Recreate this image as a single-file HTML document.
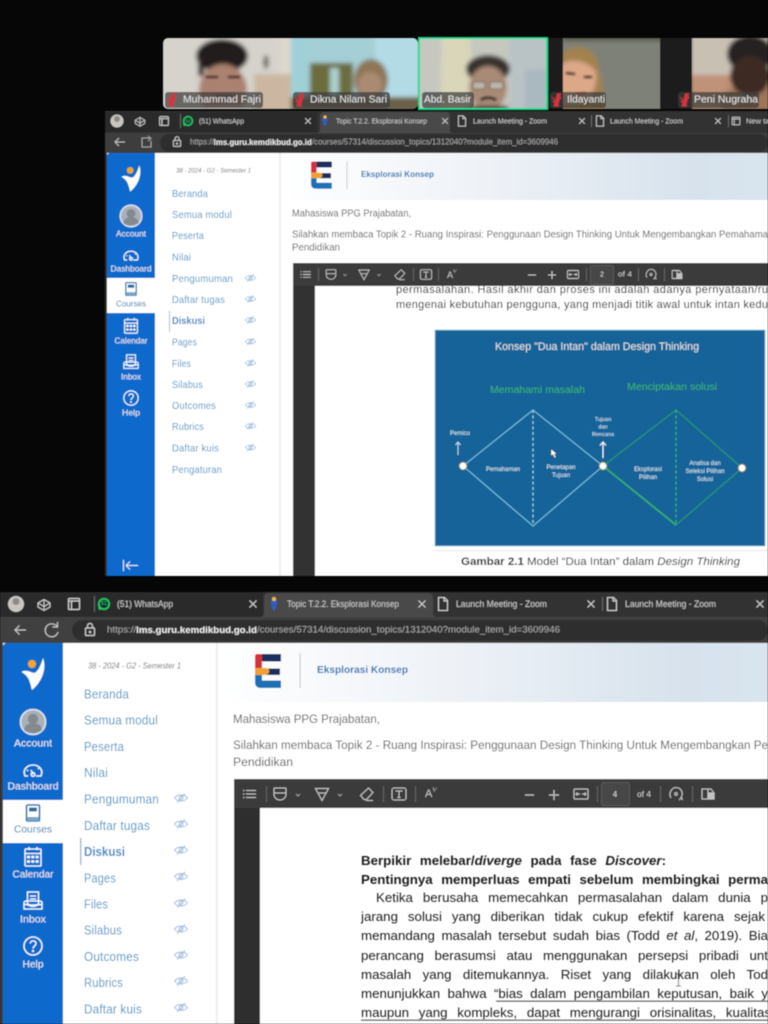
<!DOCTYPE html>
<html><head><meta charset="utf-8"><style>
html,body{margin:0;padding:0;background:#060606;width:768px;height:1024px;overflow:hidden}
svg{display:block;position:absolute;left:0;top:0}
text{font-family:"Liberation Sans",sans-serif;dominant-baseline:central}
.w{fill:#e6e6e6}.n{fill:#4a94c6;letter-spacing:.2px}
.i{fill:none;stroke:#c4c4c4;stroke-width:1.1}
.e{fill:none;stroke:#9dbcdb;stroke-width:1}
.s{fill:none;stroke:#fff;stroke-width:1.3}
.tab{fill:#cfcfcf}.bt{fill:#f2f2f2}
.g{fill:#5c5c5c}
.p{fill:#151515}
.d{fill:#dff0f6}
#txt{position:absolute;left:0;top:0;width:768px;height:1024px;overflow:hidden;filter:blur(.42px)}
.l{position:absolute;left:361px;width:407px;height:18px;line-height:18px;font-family:"Liberation Sans",sans-serif;font-size:13.3px;color:#1c1c1c;text-align:justify;text-align-last:justify}
</style></head><body>
<svg width="768" height="1024" viewBox="0 0 768 1024" xmlns="http://www.w3.org/2000/svg">
<defs>
<filter id="b" x="0" y="0" width="100%" height="100%"><feGaussianBlur stdDeviation=".42"/></filter>
<filter id="v" x="-20%" y="-20%" width="140%" height="140%"><feGaussianBlur stdDeviation="2"/></filter>
<filter id="v2" x="-20%" y="-20%" width="140%" height="140%"><feGaussianBlur stdDeviation="1"/></filter>
<clipPath id="t1"><rect x="163" y="38" width="255" height="71" rx="5"/></clipPath>
<clipPath id="t3"><rect x="420" y="39" width="126" height="69"/></clipPath>
<clipPath id="t4"><rect x="563" y="38" width="97" height="71"/></clipPath>
<clipPath id="t5"><rect x="692" y="38" width="76" height="71"/></clipPath>
<linearGradient id="ban" x1="0" x2="1" y1="0" y2="0"><stop offset="0" stop-color="#fff"/><stop offset=".42" stop-color="#eef2f7"/><stop offset=".85" stop-color="#d7e2ed"/><stop offset="1" stop-color="#d9e4ee"/></linearGradient>
<g id="eye" class="e"><path d="M-6.500 0C-3.500-4 3.500-4 6.500 0C3.500 4-3.500 4-6.500 0Z"/><circle r="2"/><path d="M-4 4.500L4-4.500"/></g>
<g id="logo"><path fill="#fff" d="M-11.500 6C-8 3-3 6 1 7C5 6 8-1 10-8C14 2 9 16-1 24C-3 16-4 10-11.500 6Z"/><circle cx="-1" cy="-2" r="4" fill="#f5a623"/></g>
<g id="avatar"><circle r="12.500" fill="#a9b0b8" stroke="#dfe7ef" stroke-width="1.600"/><circle cy="-3" r="5.200" fill="#858a90"/><path fill="#858a90" d="M-9 8C-8 2-4 1.500 0 1.500C4 1.500 8 2 9 8C5 12-5 12-9 8Z"/></g>
<g id="dash" class="s"><path d="M-5 5H-8C-11-2-5-6 0-6C5-6 11-2 8 5H3"/><path d="M0 3L-2-1M-6-1L-5 0M5-2L6-3"/><circle cx="0" cy="3.500" r="1.800"/></g>
<g id="book"><rect x="-6.500" y="-8" width="13" height="16" rx="1" fill="none" stroke="#2b6ea6" stroke-width="1.600"/><rect x="-4" y="-5.500" width="8" height="4" fill="#2b6ea6"/><rect x="-6" y="4" width="12" height="4" fill="#7aa5c9"/></g>
<g id="cal" class="s"><rect x="-8" y="-8" width="16" height="17" rx="1"/><path d="M-8-3.500H8M-4-10V-7M4-10V-7"/><path stroke-width="2.400" stroke-dasharray="3 1.300" d="M-6 0H6M-6 4.500H6"/></g>
<g id="inbox" class="s"><path d="M-9 2V8H9V2C9 0 7 0 6 0H-6C-7 0-9 0-9 2Z"/><rect x="-5.500" y="-9" width="11" height="13"/><path d="M-3-5H3M-3-2H3M-9 3.500H-4C-3 6 3 6 4 3.500H9"/></g>
<g id="help" class="s"><circle r="9"/><path d="M-2.800-2.500C-2.500-6 3-6 3-2.500C3 0 0 0 0 2.500"/><circle cy="5" r=".5"/></g>
<g id="lst" class="i"><path d="M-4-3.500H6M-4 0H6M-4 3.500H6M-7-3.500H-5.500M-7 0H-5.500M-7 3.500H-5.500"/></g>
<g id="hl" class="i"><path d="M-6-6H6M-6-6V0C-6 4-3 6 0 6C3 6 6 4 6 0V-6M-6-1H6"/></g>
<g id="flt" class="i"><path d="M-6.500-5.500H6.500L0 6.500Z M-3.500-1H3.500"/></g>
<g id="chv" class="i" style="stroke:#9a9a9a"><path d="M-2-1L0 1L2-1"/></g>
<g id="era" class="i"><path d="M-1 6.500H6M-6.500 1.500L1.500-6L6-1.500L-.5 5.500H-3Z"/></g>
<g id="tb" class="i"><rect x="-7" y="-6" width="14" height="12" rx="2"/><path d="M-3.500-3H3.500M0-3V3.500M-1.500 3.500H1.500"/></g>
<g id="fit" class="i"><rect x="-7" y="-5" width="14" height="10" rx="1"/><path fill="#c4c4c4" d="M-5 0H-1M5 0H1M-3.500-1.500L-5 0L-3.500 1.500M3.500-1.500L5 0L3.500 1.500"/></g>
<g id="rot" class="i"><path d="M-5 4C-8-1-4-6.500 0-6.500C5-6.500 8-1 5 3.500M3 6L5.500 3.500L6.500 6"/><circle r="1.300"/></g>
<g id="dual" class="i"><path d="M-6-5H0V5H-6ZM0-5L3-5L6-1V5H0"/><path fill="#c4c4c4" d="M0-1H6V5H0Z"/></g>
<g id="x" fill="none" stroke="#d0d0d0" stroke-width="1.100"><path d="M-3.500-3.500L3.500 3.500M3.500-3.500L-3.500 3.500"/></g>
<g id="doc" fill="none" stroke="#d0d0d0" stroke-width="1.100"><path d="M-4.500-6.500H1.500L4.500-3.500V6.500H-4.500ZM1-6.500V-3H4.500"/></g>
<g id="wa"><circle r="6" fill="#25c45f"/><path d="M-5 6L-5.800 2.500L-2 5Z" fill="#25c45f"/><circle r="4.200" fill="#123"/><text x="0" y="0" font-size="5" fill="#3ddc78" text-anchor="middle">51</text></g>
<g id="pin"><path fill="#2a5fc8" d="M0 7L-3 2H3Z"/><circle cy="-1.500" r="3.200" fill="#2a5fc8"/><circle cy="-5" r="2" fill="#f5b93a"/></g>
<g id="wsp" fill="none" stroke="#c7c7c7" stroke-width="1.100"><path d="M-6-1L0-4.500L6-1V3L0 6.500L-6 3Z M0-4.500V6.500 M-6-1L0 2.500L6-1"/></g>
<g id="tabs" fill="none" stroke="#d0d0d0" stroke-width="1.200"><rect x="-5.500" y="-5.500" width="11" height="11" rx="1"/><path d="M-5.500-3H5.500M-2.500-3V5.500"/></g>
<g id="lock" fill="none" stroke="#cfcfcf" stroke-width="1.200"><rect x="-4.500" y="-2" width="9" height="7.500" rx="1"/><path d="M-2.500-2V-4C-2.500-7.500 2.500-7.500 2.500-4V-2"/><circle cy="2" r=".7" fill="#cfcfcf"/></g>
<g id="E">
<path fill="#d6323b" d="M0 2.500Q0 0 2.500 0H7V14H0Z"/>
<path fill="#1c2f5e" d="M7 0H26V7.500H7Z"/>
<path fill="#f0a033" d="M0 14H9C12 14 15 15 15 17.500C15 20 12 21 9 21H0Z"/>
<path fill="#1c2f5e" d="M13 14.500H25V21H11C14 20 15.500 17 13 14.500Z"/>
<path fill="#1f6fb5" d="M0 21H7V26.500H26V34H6Q0 34 0 28Z"/>
</g>
<g id="mic"><path d="M-3.500 6.500L0-6.500H4L1 6.500Z" fill="#d5323a"/><path d="M-4 2L4-2.500" stroke="#d5323a" stroke-width="1.500"/><path d="M-5-3L2 6" stroke="#d5323a" stroke-width="1"/></g>
</defs>
<rect width="768" height="1024" fill="#060606"/>
<g filter="url(#b)">

<!-- ZOOM TILES -->
<rect x="548" y="38" width="15" height="71" fill="#1c1c1c"/>
<rect x="660" y="38" width="32" height="71" fill="#1a1a1a"/>
<g clip-path="url(#t1)"><g filter="url(#v)">
<rect x="155" y="30" width="136" height="90" fill="#d6d3cc"/>
<rect x="280" y="30" width="20" height="90" fill="#ddd8cd"/>
<rect x="254" y="74" width="40" height="40" fill="#cbb7a1"/>
<ellipse cx="266" cy="62" rx="3" ry="7" fill="#77706a"/>
<rect x="291" y="30" width="130" height="90" fill="#a4cfd6"/>
<rect x="375" y="30" width="45" height="80" fill="#b3dbe6"/>
<rect x="291" y="30" width="15" height="80" fill="#9fd0d8"/>
<rect x="310" y="63" width="43" height="36" fill="#6d6c3c"/>
<rect x="330" y="68" width="9" height="30" fill="#aad0ce"/>
<rect x="291" y="97" width="130" height="15" fill="#6c6148"/>
<ellipse cx="371" cy="80" rx="17" ry="21" fill="#8d7757"/>
<ellipse cx="370" cy="85" rx="12" ry="13" fill="#ab8a73"/>
<ellipse cx="222" cy="56" rx="26" ry="17" fill="#221c1a"/>
<rect x="198" y="56" width="6" height="20" fill="#2a2220"/>
<ellipse cx="223" cy="90" rx="24" ry="26" fill="#ab8170"/>
<rect x="206" y="107" width="34" height="6" fill="#e5e0d8"/>
</g>
<g filter="url(#v2)"><path d="M206 77H218M228 77H240" stroke="#3b2c28" stroke-width="2"/><path d="M216 96H232" stroke="#6d453c" stroke-width="3"/></g>
<g filter="url(#v2)"><path d="M362 82H367M373 82H379" stroke="#54392f" stroke-width="1.500"/></g></g>
<rect x="418" y="37" width="130" height="73" fill="#19dc8c"/>
<g clip-path="url(#t3)"><g filter="url(#v)">
<rect x="415" y="35" width="135" height="78" fill="#c6c8bf"/>
<path d="M442 35H470L475 112H440Z" fill="#d9d6ba"/>
<rect x="510" y="35" width="40" height="78" fill="#b9c2c5"/>
<rect x="525" y="70" width="25" height="45" fill="#aab8bf"/>
<ellipse cx="488" cy="69" rx="22" ry="14" fill="#38332f"/>
<ellipse cx="488" cy="88" rx="19" ry="22" fill="#a98a76"/>
<rect x="470" y="106" width="38" height="8" fill="#34302d"/>
</g>
<g filter="url(#v2)"><rect x="473" y="82" width="12" height="7" rx="2" fill="#cfd0ca" fill-opacity=".6" stroke="#4a4a44" stroke-width=".8"/><rect x="490" y="82" width="13" height="7" rx="2" fill="#cfd0ca" fill-opacity=".6" stroke="#4a4a44" stroke-width=".8"/><path d="M481 100C485 97 491 97 496 100" stroke="#3a2d26" stroke-width="2.500" fill="none"/></g></g>
<g clip-path="url(#t4)"><g filter="url(#v)">
<rect x="560" y="30" width="105" height="85" fill="#7e8178"/>
<rect x="563" y="30" width="100" height="11" fill="#5a574a"/>
<path d="M561 58C566 44 586 44 594 54C603 70 603 100 606 114H561Z" fill="#a3824d"/>
<path d="M559 66C568 57 588 60 596 72C598 87 590 103 575 105H559Z" fill="#dca888"/>
</g>
<g filter="url(#v2)"><path d="M566 73L575 74M584 77L592 77" stroke="#3f2a20" stroke-width="2"/><path d="M576 94L586 93" stroke="#a8534d" stroke-width="2"/></g></g>
<g clip-path="url(#t5)"><g filter="url(#v)">
<rect x="690" y="30" width="80" height="85" fill="#c9c0b4"/>
<rect x="690" y="75" width="80" height="40" fill="#c09278"/>
<ellipse cx="752" cy="102" rx="32" ry="18" fill="#9f7459"/>
<ellipse cx="750" cy="54" rx="23" ry="19" fill="#272220"/>
<ellipse cx="750" cy="76" rx="20" ry="20" fill="#3d2b23"/>
</g></g>
<!-- name badges -->
<rect x="165" y="92" width="98" height="16" rx="3" fill="#3c3c3c" fill-opacity=".72"/>
<rect x="293" y="92" width="97" height="16" rx="3" fill="#3c3c3c" fill-opacity=".72"/>
<rect x="422" y="92" width="52" height="16" rx="3" fill="#3c3c3c" fill-opacity=".72"/>
<rect x="550" y="92" width="56" height="16" rx="3" fill="#3c3c3c" fill-opacity=".72"/>
<rect x="678" y="92" width="81" height="16" rx="3" fill="#3c3c3c" fill-opacity=".72"/>
<use href="#mic" transform="translate(172,100)"/><use href="#mic" transform="translate(300,100)"/><use href="#mic" transform="translate(557,100)"/><use href="#mic" transform="translate(685,100)"/>
<text class="w" x="183" y="100" font-size="10" textLength="78" lengthAdjust="spacingAndGlyphs">Muhammad Fajri</text>
<text class="w" x="310" y="100" font-size="10" textLength="77" lengthAdjust="spacingAndGlyphs">Dikna Nilam Sari</text>
<text class="w" x="424" y="100" font-size="10" textLength="47" lengthAdjust="spacingAndGlyphs">Abd. Basir</text>
<text class="w" x="567" y="100" font-size="10" textLength="38" lengthAdjust="spacingAndGlyphs">Ildayanti</text>
<text class="w" x="694" y="100" font-size="10" textLength="64" lengthAdjust="spacingAndGlyphs">Peni Nugraha</text>

<!-- UPPER BROWSER -->
<rect x="105" y="111" width="663" height="465" fill="#333"/>
<rect x="105" y="112" width="663" height="21" fill="#303030"/>
<path d="M105 112H317V132H105Z" fill="#2b2b2b"/>
<path d="M317 133Q320 133 320 129V116Q320 112 324 112H446Q450 112 450 116V129Q450 133 453 133Z" fill="#484848"/>
<rect x="105" y="133" width="663" height="20" fill="#3d3d3d"/>
<rect x="160" y="134" width="608" height="18" rx="9" fill="#2e2e2e"/>
<circle cx="117" cy="121" r="6.500" fill="#c9c6c2"/><circle cx="117" cy="119" r="3" fill="#8d8987"/>
<use href="#wsp" transform="translate(140,121) scale(.8)"/><use href="#tabs" transform="translate(164,121) scale(.8)"/>
<rect x="180" y="114" width="1" height="14" fill="#666"/>
<use href="#wa" transform="translate(188,121) scale(.85)"/>
<text class="tab" x="199" y="121" font-size="7.500" textLength="45" lengthAdjust="spacingAndGlyphs">(51) WhatsApp</text>
<use href="#x" transform="translate(308,121) scale(.8)"/>
<use href="#pin" transform="translate(325,121) scale(.8)"/>
<text class="tab" x="336" y="121" font-size="7.500" textLength="91" lengthAdjust="spacingAndGlyphs">Topic T.2.2. Eksplorasi Konsep</text>
<use href="#x" transform="translate(445,121) scale(.8)"/>
<use href="#doc" transform="translate(462,121) scale(.8)"/>
<text class="tab" x="473" y="121" font-size="7.500" textLength="74" lengthAdjust="spacingAndGlyphs">Launch Meeting - Zoom</text>
<use href="#x" transform="translate(582,121) scale(.8)"/>
<rect x="591" y="115" width="1" height="12" fill="#666"/>
<use href="#doc" transform="translate(600,121) scale(.8)"/>
<text class="tab" x="610" y="121" font-size="7.500" textLength="73" lengthAdjust="spacingAndGlyphs">Launch Meeting - Zoom</text>
<use href="#x" transform="translate(718,121) scale(.8)"/>
<rect x="728" y="115" width="1" height="12" fill="#666"/>
<use href="#tabs" transform="translate(736,121) scale(.7)"/>
<text class="tab" x="746" y="121" font-size="7.500">New tab</text>
<path d="M125 142H115M119 138L115 142L119 146" fill="none" stroke="#bdbdbd" stroke-width="1.100"/>
<path d="M150 138H142V147H151V141M148 136L151 138.500L148 141" fill="none" stroke="#a5a5a5" stroke-width="1.100"/>
<use href="#lock" transform="translate(177,142) scale(.8)"/>
<text x="190" y="142" font-size="8" fill="#a9a9a9" textLength="368" lengthAdjust="spacingAndGlyphs">https://<tspan fill="#f0f0f0" font-weight="bold">lms.guru.kemdikbud.go.id</tspan>/courses/57314/discussion_topics/1312040?module_item_id=3609946</text>

<!-- upper page -->
<rect x="107" y="153" width="661" height="423" fill="#fff"/>
<path d="M107 576V156Q107 153 110 153H155V576Z" fill="#0a6bcc"/>
<rect x="107" y="278" width="48" height="35" fill="#fff"/>
<use href="#logo" transform="translate(131,172) scale(.82)"/>
<use href="#avatar" transform="translate(131,216) scale(.86)"/>
<text class="bt" x="131" y="234" font-size="8.200" text-anchor="middle" textLength="30" lengthAdjust="spacingAndGlyphs">Account</text>
<use href="#dash" transform="translate(131,256) scale(.8)"/>
<text class="bt" x="131" y="269" font-size="8.200" text-anchor="middle" textLength="41" lengthAdjust="spacingAndGlyphs">Dashboard</text>
<use href="#book" transform="translate(131,289) scale(.8)"/>
<text x="131" y="304" font-size="8.200" fill="#2e77b0" text-anchor="middle" textLength="30" lengthAdjust="spacingAndGlyphs">Courses</text>
<use href="#cal" transform="translate(131,326) scale(.8)"/>
<text class="bt" x="131" y="341" font-size="8.200" text-anchor="middle" textLength="33" lengthAdjust="spacingAndGlyphs">Calendar</text>
<use href="#inbox" transform="translate(131,362) scale(.8)"/>
<text class="bt" x="131" y="377" font-size="8.200" text-anchor="middle" textLength="20" lengthAdjust="spacingAndGlyphs">Inbox</text>
<use href="#help" transform="translate(131,398) scale(.8)"/>
<text class="bt" x="131" y="413" font-size="8.200" text-anchor="middle" textLength="18" lengthAdjust="spacingAndGlyphs">Help</text>
<path d="M123.500 560V571M126 565.500H138M126 565.500L130 561.500M126 565.500L130 569.500" fill="none" stroke="#e5effa" stroke-width="1"/>
<rect x="279" y="153" width="2" height="423" fill="#eceef1"/>
<text x="176" y="171" font-size="6.400" font-style="italic" fill="#6f6f6f" textLength="75" lengthAdjust="spacingAndGlyphs">38 - 2024 - G2 - Semester 1</text>
<text class="n" x="172" y="194" font-size="10.500" textLength="36" lengthAdjust="spacingAndGlyphs">Beranda</text>
<text class="n" x="172" y="215" font-size="10.500" textLength="60" lengthAdjust="spacingAndGlyphs">Semua modul</text>
<text class="n" x="172" y="236" font-size="10.500" textLength="32" lengthAdjust="spacingAndGlyphs">Peserta</text>
<text class="n" x="172" y="257.500" font-size="10.500" textLength="19" lengthAdjust="spacingAndGlyphs">Nilai</text>
<text class="n" x="172" y="279" font-size="10.500" textLength="61" lengthAdjust="spacingAndGlyphs">Pengumuman</text>
<text class="n" x="172" y="300" font-size="10.500" textLength="53" lengthAdjust="spacingAndGlyphs">Daftar tugas</text>
<text x="172" y="321" font-size="10.500" font-weight="bold" fill="#3f86c4" textLength="33" lengthAdjust="spacingAndGlyphs">Diskusi</text>
<text class="n" x="172" y="342.500" font-size="10.500" textLength="25" lengthAdjust="spacingAndGlyphs">Pages</text>
<text class="n" x="172" y="364" font-size="10.500" textLength="19" lengthAdjust="spacingAndGlyphs">Files</text>
<text class="n" x="172" y="385" font-size="10.500" textLength="31" lengthAdjust="spacingAndGlyphs">Silabus</text>
<text class="n" x="172" y="406" font-size="10.500" textLength="44" lengthAdjust="spacingAndGlyphs">Outcomes</text>
<text class="n" x="172" y="427" font-size="10.500" textLength="32" lengthAdjust="spacingAndGlyphs">Rubrics</text>
<text class="n" x="172" y="448.500" font-size="10.500" textLength="47" lengthAdjust="spacingAndGlyphs">Daftar kuis</text>
<text class="n" x="172" y="470" font-size="10.500" textLength="50" lengthAdjust="spacingAndGlyphs">Pengaturan</text>
<rect x="169" y="311" width="1" height="21" fill="#9dbbd8"/>
<use href="#eye" transform="translate(250.500,278) scale(.8)"/><use href="#eye" transform="translate(250.500,299) scale(.8)"/><use href="#eye" transform="translate(250.500,320) scale(.8)"/><use href="#eye" transform="translate(250.500,341.500) scale(.8)"/><use href="#eye" transform="translate(250.500,363) scale(.8)"/><use href="#eye" transform="translate(250.500,384) scale(.8)"/><use href="#eye" transform="translate(250.500,405) scale(.8)"/><use href="#eye" transform="translate(250.500,426) scale(.8)"/><use href="#eye" transform="translate(250.500,447.500) scale(.8)"/>
<rect x="281" y="153" width="487" height="47" fill="url(#ban)"/>
<use href="#E" transform="translate(311,161.500) scale(.8)"/>
<rect x="346.500" y="161" width="1" height="28" fill="#c4cfda"/>
<text x="361" y="174" font-size="8.500" font-weight="bold" fill="#2b72b4" textLength="73" lengthAdjust="spacingAndGlyphs">Eksplorasi Konsep</text>
<text class="g" x="292" y="214" font-size="9.800" textLength="119" lengthAdjust="spacingAndGlyphs">Mahasiswa PPG Prajabatan,</text>
<text class="g" x="292" y="235" font-size="9.800" textLength="476" lengthAdjust="spacingAndGlyphs">Silahkan membaca Topik 2 - Ruang Inspirasi: Penggunaan Design Thinking Untuk Mengembangkan Pemahama</text>
<text class="g" x="292" y="248" font-size="9.800" textLength="48" lengthAdjust="spacingAndGlyphs">Pendidikan</text>
<rect x="293" y="263" width="475" height="313" fill="#333"/>
<rect x="293" y="263" width="475" height="23" fill="#3b3b3b"/>
<rect x="315" y="286" width="453" height="290" fill="#fff"/>
<text class="p" x="396" y="290" font-size="11" textLength="372" lengthAdjust="spacing">permasalahan. Hasil akhir dan proses ini adalah adanya pernyataan/ru</text>
<text class="p" x="396" y="305" font-size="11" textLength="372" lengthAdjust="spacing">mengenai kebutuhan pengguna, yang menjadi titik awal untuk intan kedu</text>
<rect x="293" y="263" width="475" height="23" fill="#3b3b3b"/>
<use href="#lst" transform="translate(306,274.500) scale(.8)"/><rect x="318" y="268" width="1" height="13" fill="#666"/>
<use href="#hl" transform="translate(331,274.500) scale(.8)"/><use href="#chv" transform="translate(345,275) scale(.8)"/>
<use href="#flt" transform="translate(364,274.500) scale(.8)"/><use href="#chv" transform="translate(379,275) scale(.8)"/>
<use href="#era" transform="translate(400,274.500) scale(.8)"/><rect x="413" y="268" width="1" height="13" fill="#666"/>
<use href="#tb" transform="translate(426,274.500) scale(.8)"/><rect x="438" y="268" width="1" height="13" fill="#666"/>
<text x="447" y="275" font-size="9" fill="#c4c4c4">A<tspan font-size="5" dy="-3">&#8543;</tspan></text>
<path d="M528 275H536M548 275H556M552 271V279" stroke="#c4c4c4" stroke-width="1.100"/>
<use href="#fit" transform="translate(573,274.500) scale(.8)"/><rect x="586" y="268" width="1" height="13" fill="#666"/>
<rect x="590.500" y="265.500" width="23" height="19" rx="1.500" fill="#474747" stroke="#5a5a5a"/>
<text x="602" y="275" font-size="7" fill="#ddd" text-anchor="middle">2</text>
<text x="618" y="275" font-size="7" fill="#ccc" textLength="14" lengthAdjust="spacingAndGlyphs">of 4</text>
<rect x="638" y="268" width="1" height="13" fill="#666"/>
<use href="#rot" transform="translate(651,274.500) scale(.8)"/><rect x="664" y="268" width="1" height="13" fill="#666"/>
<use href="#dual" transform="translate(677,274.500) scale(.8)"/>

<!-- diagram -->
<rect x="435" y="330" width="330" height="216" fill="#13649a" stroke="#8fc4dc" stroke-width=".8"/>
<text class="w" x="495" y="347" font-size="11" textLength="204" lengthAdjust="spacingAndGlyphs">Konsep "Dua Intan" dalam Design Thinking</text>
<text x="490" y="390" font-size="10.500" fill="#3eb46a" textLength="95" lengthAdjust="spacingAndGlyphs">Memahami masalah</text>
<text x="627" y="387" font-size="10.500" fill="#3eb46a" textLength="90" lengthAdjust="spacingAndGlyphs">Menciptakan solusi</text>
<path d="M463 466L533 410L603 466L533 526Z" fill="none" stroke="#7cc4e4" stroke-width="1"/>
<path d="M533 410V526" stroke="#8fd0e8" stroke-width="1.300" stroke-dasharray="3 2.500"/>
<path d="M603 466L676 410L742 468L676 525L603 466" fill="none" stroke="#2f9f63" stroke-width="1"/>
<path d="M603 466L676 525" stroke="#39b368" stroke-width="1.600"/>
<path d="M676 410V525" stroke="#39b368" stroke-width="1.200" stroke-dasharray="3 2.500"/>
<circle cx="463" cy="466" r="3.600" fill="#fff" stroke="#c8a96a" stroke-width=".8"/>
<circle cx="603" cy="466" r="3.600" fill="#fff" stroke="#c8a96a" stroke-width=".8"/>
<circle cx="742" cy="468" r="3.600" fill="#fff" stroke="#c8a96a" stroke-width=".8"/>
<text class="d" x="460" y="434" font-size="6" text-anchor="middle">Pemicu</text>
<path d="M458 455V442M455.500 445L458 442L460.500 445" fill="none" stroke="#dff0f6" stroke-width=".8"/>
<text class="d" x="603" y="420" font-size="5.500" text-anchor="middle">Tujuan</text>
<text class="d" x="603" y="427.500" font-size="5.500" text-anchor="middle">dan</text>
<text class="d" x="603" y="435" font-size="5.500" text-anchor="middle">Rencana</text>
<path d="M603 458V442M600 445.500L603 442L606 445.500" fill="none" stroke="#fff" stroke-width="1"/>
<text class="d" x="503" y="470" font-size="6" text-anchor="middle">Pemahaman</text>
<text class="d" x="561" y="468" font-size="6" text-anchor="middle">Penetapan</text>
<text class="d" x="561" y="476" font-size="6" text-anchor="middle">Tujuan</text>
<text class="d" x="648" y="470" font-size="6" text-anchor="middle">Eksplorasi</text>
<text class="d" x="648" y="478" font-size="6" text-anchor="middle">Pilihan</text>
<text class="d" x="705" y="464" font-size="6" text-anchor="middle">Analisa dan</text>
<text class="d" x="705" y="472" font-size="6" text-anchor="middle">Seleksi Pilihan</text>
<text class="d" x="705" y="480" font-size="6" text-anchor="middle">Solusi</text>
<path d="M551 449L551 456L553 454.500L554.500 458L556 457L554.500 454H557Z" fill="#fff" stroke="#222" stroke-width=".4"/>
<rect x="435" y="550" width="333" height="1" fill="#e8e8e8"/>
<text class="p" x="461" y="562" font-size="11" textLength="279" lengthAdjust="spacingAndGlyphs"><tspan font-weight="bold">Gambar 2.1</tspan> Model “Dua Intan” dalam <tspan font-style="italic">Design Thinking</tspan></text>

<!-- LOWER BROWSER -->
<rect x="0" y="592" width="768" height="432" fill="#3d3d3d"/>
<rect x="0" y="592" width="768" height="25" fill="#333"/>
<path d="M0 592H263V617H0Z" fill="#2c2c2c"/>
<path d="M260 617Q264 617 264 613V598Q264 593 269 593H428Q433 593 433 598V613Q433 617 437 617Z" fill="#4a4a4a"/>
<rect x="0" y="617" width="768" height="26" fill="#3f3f3f"/>
<rect x="72" y="620" width="696" height="21" rx="10.500" fill="#2e2e2e"/>
<circle cx="16" cy="604" r="8" fill="#c9c6c2"/><circle cx="16" cy="601.500" r="3.500" fill="#8d8987"/>
<use href="#wsp" transform="translate(44,604)"/><use href="#tabs" transform="translate(74,604)"/>
<rect x="94" y="596" width="1" height="16" fill="#666"/>
<use href="#wa" transform="translate(104,604)"/>
<text class="tab" x="117" y="604" font-size="9" textLength="56" lengthAdjust="spacingAndGlyphs">(51) WhatsApp</text>
<use href="#x" transform="translate(253,604)"/>
<use href="#pin" transform="translate(274,604)"/>
<text class="tab" x="287" y="604" font-size="9" textLength="112" lengthAdjust="spacingAndGlyphs">Topic T.2.2. Eksplorasi Konsep</text>
<use href="#x" transform="translate(422,604)"/>
<use href="#doc" transform="translate(443,604)"/>
<text class="tab" x="456" y="604" font-size="9" textLength="91" lengthAdjust="spacingAndGlyphs">Launch Meeting - Zoom</text>
<use href="#x" transform="translate(591,604)"/>
<rect x="602" y="597" width="1" height="14" fill="#666"/>
<use href="#doc" transform="translate(612,604)"/>
<text class="tab" x="625" y="604" font-size="9" textLength="91" lengthAdjust="spacingAndGlyphs">Launch Meeting - Zoom</text>
<use href="#x" transform="translate(760,604)"/>
<path d="M26 630H15M19.500 625.500L15 630L19.500 634.500" fill="none" stroke="#c5c5c5" stroke-width="1.200"/>
<path d="M57 626.500A6.500 6.500 0 1 0 58 632M57.500 622V627H52.500" fill="none" stroke="#c5c5c5" stroke-width="1.200"/>
<use href="#lock" transform="translate(90,630)"/>
<text x="107" y="630" font-size="9.500" fill="#a9a9a9" textLength="453" lengthAdjust="spacingAndGlyphs">https://<tspan fill="#f0f0f0" font-weight="bold">lms.guru.kemdikbud.go.id</tspan>/courses/57314/discussion_topics/1312040?module_item_id=3609946</text>

<!-- lower page -->
<rect x="3" y="643" width="765" height="381" fill="#fff"/>
<path d="M3 1024V647Q3 643 7 643H63V1024Z" fill="#0a6bcc"/>
<rect x="3" y="800" width="60" height="43" fill="#fff"/>
<use href="#logo" transform="translate(33,666)"/>
<use href="#avatar" transform="translate(33,722)"/>
<text class="bt" x="33" y="744" font-size="10" text-anchor="middle" textLength="38" lengthAdjust="spacingAndGlyphs">Account</text>
<use href="#dash" transform="translate(33,771)"/>
<text class="bt" x="33" y="787" font-size="10" text-anchor="middle" textLength="51" lengthAdjust="spacingAndGlyphs">Dashboard</text>
<use href="#book" transform="translate(33,813)"/>
<text x="33" y="830" font-size="10" fill="#2e77b0" text-anchor="middle" textLength="38" lengthAdjust="spacingAndGlyphs">Courses</text>
<use href="#cal" transform="translate(33,857)"/>
<text class="bt" x="33" y="875" font-size="10" text-anchor="middle" textLength="41" lengthAdjust="spacingAndGlyphs">Calendar</text>
<use href="#inbox" transform="translate(33,901)"/>
<text class="bt" x="33" y="920" font-size="10" text-anchor="middle" textLength="26" lengthAdjust="spacingAndGlyphs">Inbox</text>
<use href="#help" transform="translate(33,946)"/>
<text class="bt" x="33" y="965" font-size="10" text-anchor="middle" textLength="21" lengthAdjust="spacingAndGlyphs">Help</text>
<rect x="216" y="643" width="2" height="381" fill="#eceef1"/>
<text x="88" y="666" font-size="7.800" font-style="italic" fill="#6f6f6f" textLength="93" lengthAdjust="spacingAndGlyphs">38 - 2024 - G2 - Semester 1</text>
<text class="n" x="84" y="694" font-size="13" textLength="45" lengthAdjust="spacingAndGlyphs">Beranda</text>
<text class="n" x="84" y="720" font-size="13" textLength="74" lengthAdjust="spacingAndGlyphs">Semua modul</text>
<text class="n" x="84" y="746.500" font-size="13" textLength="40" lengthAdjust="spacingAndGlyphs">Peserta</text>
<text class="n" x="84" y="772.500" font-size="13" textLength="24" lengthAdjust="spacingAndGlyphs">Nilai</text>
<text class="n" x="84" y="799" font-size="13" textLength="75" lengthAdjust="spacingAndGlyphs">Pengumuman</text>
<text class="n" x="84" y="825.500" font-size="13" textLength="66" lengthAdjust="spacingAndGlyphs">Daftar tugas</text>
<text x="84" y="851.500" font-size="13" font-weight="bold" fill="#3f86c4" textLength="41" lengthAdjust="spacingAndGlyphs">Diskusi</text>
<text class="n" x="84" y="878" font-size="13" textLength="32" lengthAdjust="spacingAndGlyphs">Pages</text>
<text class="n" x="84" y="904" font-size="13" textLength="24" lengthAdjust="spacingAndGlyphs">Files</text>
<text class="n" x="84" y="930" font-size="13" textLength="38" lengthAdjust="spacingAndGlyphs">Silabus</text>
<text class="n" x="84" y="956.500" font-size="13" textLength="55" lengthAdjust="spacingAndGlyphs">Outcomes</text>
<text class="n" x="84" y="982.500" font-size="13" textLength="39" lengthAdjust="spacingAndGlyphs">Rubrics</text>
<text class="n" x="84" y="1009" font-size="13" textLength="58" lengthAdjust="spacingAndGlyphs">Daftar kuis</text>
<rect x="80" y="838" width="1.500" height="27" fill="#9dbbd8"/>
<use href="#eye" transform="translate(181,798)"/><use href="#eye" transform="translate(181,824)"/><use href="#eye" transform="translate(181,850)"/><use href="#eye" transform="translate(181,876.500)"/><use href="#eye" transform="translate(181,903)"/><use href="#eye" transform="translate(181,929)"/><use href="#eye" transform="translate(181,955)"/><use href="#eye" transform="translate(181,981)"/><use href="#eye" transform="translate(181,1007.500)"/>
<rect x="218" y="643" width="550" height="59" fill="url(#ban)"/>
<use href="#E" transform="translate(255,654)"/>
<rect x="299.500" y="653" width="1.200" height="35" fill="#c4cfda"/>
<text x="317" y="670" font-size="10.500" font-weight="bold" fill="#2b72b4" textLength="91" lengthAdjust="spacingAndGlyphs">Eksplorasi Konsep</text>
<text class="g" x="233" y="719" font-size="12.300" textLength="147" lengthAdjust="spacingAndGlyphs">Mahasiswa PPG Prajabatan,</text>
<text class="g" x="233" y="745" font-size="12.300" textLength="535" lengthAdjust="spacingAndGlyphs">Silahkan membaca Topik 2 - Ruang Inspirasi: Penggunaan Design Thinking Untuk Mengembangkan Pe</text>
<text class="g" x="233" y="762" font-size="12.300" textLength="60" lengthAdjust="spacingAndGlyphs">Pendidikan</text>
<rect x="234" y="779" width="534" height="245" fill="#2f2f2f"/>
<rect x="234" y="779" width="534" height="29" fill="#3b3b3b"/>
<rect x="260" y="808" width="508" height="216" fill="#fff"/>
<use href="#lst" transform="translate(250,794)"/><rect x="266" y="786" width="1" height="16" fill="#666"/>
<use href="#hl" transform="translate(280,794)"/><use href="#chv" transform="translate(298,795)"/>
<use href="#flt" transform="translate(322,794)"/><use href="#chv" transform="translate(340,795)"/>
<use href="#era" transform="translate(367,794)"/><rect x="383" y="786" width="1" height="16" fill="#666"/>
<use href="#tb" transform="translate(399,794)"/><rect x="415" y="786" width="1" height="16" fill="#666"/>
<text x="425" y="794" font-size="11" fill="#c4c4c4">A<tspan font-size="6" dy="-3">&#8543;</tspan></text>
<path d="M525 795H534M549 795H559M554 790V800" stroke="#c4c4c4" stroke-width="1.200"/>
<use href="#fit" transform="translate(581,794)"/><rect x="597" y="786" width="1" height="16" fill="#666"/>
<rect x="601.500" y="782.500" width="28" height="23" rx="2" fill="#474747" stroke="#5a5a5a"/>
<text x="615" y="794.500" font-size="8" fill="#ddd" text-anchor="middle">4</text>
<text x="637" y="794.500" font-size="8" fill="#ccc" textLength="14" lengthAdjust="spacingAndGlyphs">of 4</text>
<rect x="660" y="786" width="1" height="16" fill="#666"/>
<use href="#rot" transform="translate(676,794)"/><rect x="692" y="786" width="1" height="16" fill="#666"/>
<use href="#dual" transform="translate(708,794)"/>
<rect x="496" y="1000.500" width="272" height="1.200" fill="#1a1a1a"/>
<rect x="361" y="1019.500" width="407" height="1.200" fill="#1a1a1a"/>
<path d="M676 974H681M678.500 974V986M676 986H681" stroke="#333" stroke-width=".7" fill="none"/>
</g>
</svg>
<div id="txt">
<div class="l" style="top:852px;width:305px;font-weight:bold">Berpikir melebar/<i>diverge</i> pada fase <i>Discover</i>:</div>
<div class="l" style="top:871px;font-weight:bold">Pentingnya memperluas empati sebelum membingkai perma</div>
<div class="l" style="top:889px;left:376px;width:392px">Ketika berusaha memecahkan permasalahan dalam dunia p</div>
<div class="l" style="top:908px;width:404px">jarang solusi yang diberikan tidak cukup efektif karena sejak</div>
<div class="l" style="top:927px">memandang masalah tersebut sudah bias (Todd <i>et al</i>, 2019). Bia</div>
<div class="l" style="top:947px">perancang berasumsi atau menggunakan persepsi pribadi unt</div>
<div class="l" style="top:966px">masalah yang ditemukannya. Riset yang dilakukan oleh Tod</div>
<div class="l" style="top:985px">menunjukkan bahwa “bias dalam pengambilan keputusan, baik y</div>
<div class="l" style="top:1004px;width:410px">maupun yang kompleks, dapat mengurangi orisinalitas, kualitas</div>
</div>
</body></html>
